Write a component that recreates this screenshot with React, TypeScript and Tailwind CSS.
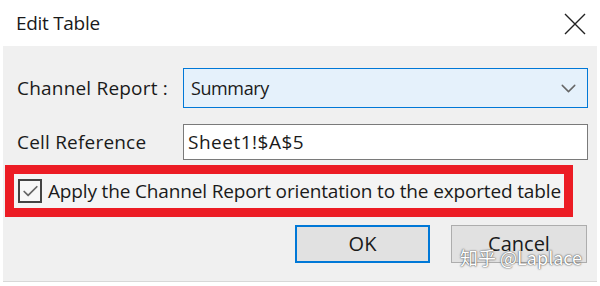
import { Check, ChevronDown } from "lucide-react";

const App = () => {
  return (
    <div className="w-[600px] h-[286px] bg-white font-['Open_Sans',sans-serif] text-[#1a1a1a] relative overflow-hidden">
      <header className="h-[46px] flex items-center justify-between pl-[16px] pr-[14px]">
        <h1 className="text-[19px] tracking-[-0.3px]">Edit Table</h1>
        <svg width="22" height="22" viewBox="0 0 22 22" className="mt-[1px]">
          <path d="M1 1L21 21M21 1L1 21" stroke="#222" strokeWidth="1.4" />
        </svg>
      </header>

      <main className="mx-[3px] h-[236px] bg-[#f0f0f0] border-b border-[#d8d8d8] pt-[22px]">
        <div className="flex items-center h-[40px] pl-[14px] pr-[9px]">
          <span className="w-[166px] text-[19px] tracking-[0.2px]">Channel Report :</span>
          <div className="flex-1 h-[40px] flex items-center justify-between border-[1.5px] border-[#0078d7] bg-[#e5f1fb] pl-[7px] pr-[6px]">
            <span className="text-[18px] tracking-[-0.4px]">Summary</span>
            <ChevronDown className="w-[25px] h-[25px] text-[#666]" strokeWidth={1.4} />
          </div>
        </div>

        <div className="flex items-center h-[36px] mt-[16px] pl-[14px] pr-[9px]">
          <span className="w-[166px] text-[19px] tracking-[0.2px]">Cell Reference</span>
          <div className="flex-1 h-[36px] flex items-center border border-[#7a7a7a] bg-white pl-[4px]">
            <span className="text-[19px] tracking-[0.5px]">Sheet1!$A$5</span>
          </div>
        </div>

        <div className="mt-[5px] ml-[2px] w-[568px] h-[52px] border-[9px] border-[#ec1c24] bg-[#f4f4f4] flex items-center pl-[4px]">
          <div className="w-[24px] h-[24px] border-[2px] border-[#444] bg-[#f8f8f8] flex items-center justify-center">
            <Check className="w-[19px] h-[19px] text-[#666]" strokeWidth={2.2} />
          </div>
          <span className="ml-[6px] text-[19px] tracking-[-0.15px]">
            Apply the Channel Report orientation to the exported table
          </span>
        </div>

        <div className="flex justify-end gap-[21px] mt-[8px] pr-[10px]">
          <button className="w-[135px] h-[38px] border-[2px] border-[#0078d7] bg-[#e1e1e1] text-[20px]">
            OK
          </button>
          <button className="w-[136px] h-[38px] border border-[#adadad] bg-[#e1e1e1] text-[20px]">
            Cancel
          </button>
        </div>
      </main>

      <div className="absolute left-[460px] top-[244px] text-[18px] text-white font-['Noto_Sans_CJK_SC',sans-serif] [text-shadow:0_0_2px_#555,0_0_1px_#555]">
        知乎 @Laplace
      </div>
    </div>
  );
};

export default App;
